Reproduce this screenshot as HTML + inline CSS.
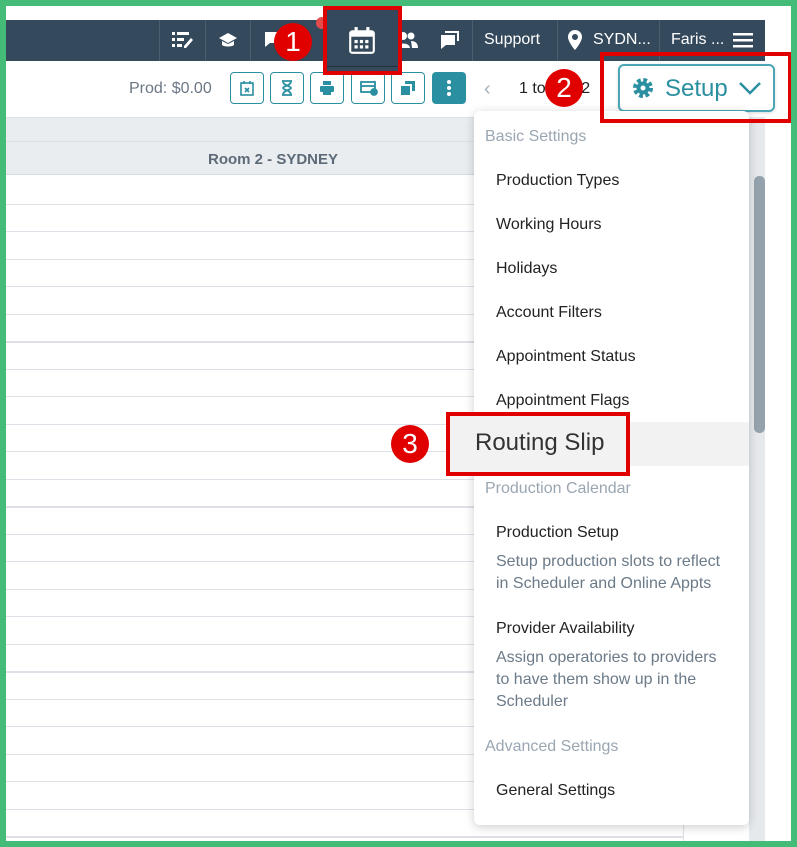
<!DOCTYPE html>
<html><head><meta charset="utf-8"><style>
*{margin:0;padding:0;box-sizing:border-box}
body{width:797px;height:847px;background:#45bb78;position:relative;overflow:hidden;font-family:"Liberation Sans",Roboto,sans-serif}
.a{position:absolute}
#page{left:6px;top:6px;width:785px;height:835px;background:#fff;overflow:hidden}
.nav{left:0;top:14px;width:759px;height:41px;background:#34495c}
.sep{top:0;width:1px;height:41px;background:#4b5e70}
.nt{color:#fff;font-size:16px;top:11px}
.btn{top:66px;width:34px;height:32px;border:1.5px solid #2a8fa0;border-radius:4px;background:#fff}
.line{left:0;width:677px;height:1px;background:#dde1e7}
.mi{left:490px;font-size:16px;color:#222}
.mh{left:479px;font-size:16px;color:#9aa6b2}
.md{left:490px;font-size:16px;color:#6b7a88;line-height:22px}
.red{border:4px solid #e00000}
.circ{width:38px;height:38px;border-radius:50%;background:#e00000;color:#fff;font-size:28px;text-align:center;line-height:38px}
</style></head><body>
<div id="page" class="a">
 <div class="a nav">
  <div class="a sep" style="left:153px"></div><div class="a sep" style="left:199px"></div><div class="a sep" style="left:244px"></div><div class="a sep" style="left:466px"></div><div class="a sep" style="left:551px"></div><div class="a sep" style="left:653px"></div>
  <svg class="a" style="left:165px;top:11px" width="22" height="18" viewBox="0 0 22 18" fill="#fff"><rect x="1" y="1" width="3" height="3"/><rect x="6" y="1" width="12" height="3"/><rect x="1" y="7" width="3" height="3"/><rect x="6" y="7" width="7" height="3"/><rect x="1" y="13" width="3" height="3"/><rect x="6" y="13" width="5" height="3"/><path d="M13 15l7-8 2 2-7 8h-2z"/></svg>
  <svg class="a" style="left:212px;top:12px" width="20" height="16" viewBox="0 0 20 16" fill="#fff"><path d="M10 1L1 6l9 5 9-5z"/><path d="M4 9v4c2 2 10 2 12 0V9l-6 3z"/></svg>
  <svg class="a" style="left:256px;top:10px" width="22" height="20" viewBox="0 0 22 20" fill="#fff"><path d="M3 2h14v11H8l-5 4z"/></svg>
  <svg class="a" style="left:390px;top:11px" width="22" height="18" viewBox="0 0 22 18" fill="#fff"><circle cx="7" cy="5" r="4"/><circle cx="15" cy="5" r="3.5"/><path d="M0 17c0-6 14-6 14 0z M15 10c4 0 7 2 7 7h-6z"/></svg>
  <svg class="a" style="left:433px;top:10px" width="22" height="20" viewBox="0 0 22 20" fill="#fff"><path d="M6 1h14v10h-2V3H6z"/><path d="M2 5h14v10H7l-5 4z"/></svg>
  <div class="a nt" style="left:478px">Support</div>
  <svg class="a" style="left:562px;top:10px" width="14" height="20" viewBox="0 0 14 20" fill="#fff"><path d="M7 0C3 0 0 3 0 7c0 5 7 13 7 13s7-8 7-13c0-4-3-7-7-7zm0 10a3 3 0 110-6 3 3 0 010 6z"/></svg>
  <div class="a nt" style="left:587px">SYDN...</div>
  <div class="a nt" style="left:665px">Faris ...</div>
  <svg class="a" style="left:727px;top:12px" width="20" height="16" viewBox="0 0 20 16" fill="#fff"><rect y="1" width="20" height="2.5"/><rect y="7" width="20" height="2.5"/><rect y="13" width="20" height="2.5"/></svg>
  <div class="a" style="left:310px;top:-3px;width:12px;height:12px;border-radius:50%;background:#e24b4b"></div>
 </div>
 <div class="a" style="left:123px;top:74px;font-size:16px;color:#6b7785">Prod: $0.00</div>
 <div class="a btn" style="left:224px"><svg class="a" style="left:9px;top:7px" width="14" height="16" viewBox="0 0 14 16" fill="none" stroke="#2a8fa0" stroke-width="1.6"><rect x="1" y="3" width="12" height="12"/><path d="M4 1v3M10 1v3M5 8l4 4M9 8l-4 4"/></svg></div>
 <div class="a btn" style="left:264px"><svg class="a" style="left:10px;top:7px" width="12" height="16" viewBox="0 0 12 16" fill="none" stroke="#2a8fa0" stroke-width="1.8"><path d="M1 1h10M1 15h10M2 1c0 5 8 5 8 7s-8 2-8 7M10 1c0 5-8 5-8 7s8 2 8 7"/></svg></div>
 <div class="a btn" style="left:304px"><svg class="a" style="left:8px;top:7px" width="16" height="16" viewBox="0 0 16 16" fill="#2a8fa0"><rect x="4" y="1" width="8" height="4"/><rect x="1" y="6" width="14" height="6" rx="1"/><rect x="4" y="10" width="8" height="5"/></svg></div>
 <div class="a btn" style="left:345px"><svg class="a" style="left:8px;top:7px" width="18" height="16" viewBox="0 0 18 16" fill="none" stroke="#2a8fa0" stroke-width="1.8"><rect x="1" y="2" width="14" height="10"/><path d="M1 6h14"/><circle cx="14" cy="12" r="3" fill="#2a8fa0"/></svg></div>
 <div class="a btn" style="left:385px"><svg class="a" style="left:8px;top:7px" width="16" height="16" viewBox="0 0 16 16" fill="#2a8fa0"><rect x="1" y="6" width="9" height="9"/><path d="M5 1h10v10h-3V4H5z"/></svg></div>
 <div class="a" style="left:426px;top:66px;width:34px;height:32px;border-radius:4px;background:#2a8fa0"><div class="a" style="left:15px;top:8px;width:4px;height:4px;border-radius:2px;background:#fff;box-shadow:0 6px 0 #fff,0 12px 0 #fff"></div></div>
 <div class="a" style="left:478px;top:72px;font-size:20px;color:#a5b2bd">&lsaquo;</div>
 <div class="a" style="left:513px;top:74px;font-size:16px;color:#222">1 to 2 of 2</div>
 <div class="a" style="left:612px;top:58px;width:157px;height:48px;border:2px solid #4aa6b5;border-radius:6px;background:#fff;box-shadow:0 1px 3px rgba(0,0,0,.15)">
  <svg class="a" style="left:13px;top:12px" width="20" height="20" viewBox="0 0 20 20"><circle cx="10" cy="10" r="7.5" fill="none" stroke="#2a8fa0" stroke-width="5" stroke-dasharray="3.5 2.4"/><circle cx="10" cy="10" r="6.5" fill="#2a8fa0"/><circle cx="10" cy="10" r="2.5" fill="#fff"/></svg>
  <div class="a" style="left:45px;top:9px;font-size:24px;color:#2a8fa0">Setup</div>
  <svg class="a" style="left:118px;top:15px" width="24" height="14" viewBox="0 0 24 14" fill="none" stroke="#2a8fa0" stroke-width="2.5"><path d="M2 2l10 10 10-10"/></svg>
 </div>
 <div class="a" style="left:0;top:111px;width:743px;height:24px;background:#e9edf0;border-top:1px solid #dde1e6"></div>
 <div class="a" style="left:0;top:135px;width:743px;height:34px;background:#e9edf0;border-top:1px solid #dbe0e5;border-bottom:1px solid #d6dbe1"></div>
 <div class="a" style="left:202px;top:145px;font-size:15px;color:#5d6b78;font-weight:bold">Room 2 - SYDNEY</div>
 <div class="a line" style="top:198px"></div><div class="a line" style="top:225px"></div><div class="a line" style="top:253px"></div><div class="a line" style="top:280px"></div><div class="a line" style="top:308px"></div><div class="a line" style="top:335px;height:2px"></div>
 <div class="a line" style="top:363px"></div><div class="a line" style="top:390px"></div><div class="a line" style="top:418px"></div><div class="a line" style="top:445px"></div><div class="a line" style="top:473px"></div><div class="a line" style="top:500px;height:2px"></div>
 <div class="a line" style="top:528px"></div><div class="a line" style="top:555px"></div><div class="a line" style="top:583px"></div><div class="a line" style="top:610px"></div><div class="a line" style="top:638px"></div><div class="a line" style="top:665px;height:2px"></div>
 <div class="a line" style="top:693px"></div><div class="a line" style="top:720px"></div><div class="a line" style="top:748px"></div><div class="a line" style="top:775px"></div><div class="a line" style="top:803px"></div><div class="a line" style="top:830px;height:2px"></div>
 <div class="a" style="left:677px;top:169px;width:1px;height:666px;background:#dde1e7"></div>
 <div class="a" style="left:743px;top:111px;width:16px;height:724px;background:#e6e9ec"></div>
 <div class="a" style="left:748px;top:170px;width:11px;height:257px;border-radius:5px;background:#95a2ad"></div>
 <div class="a" style="left:468px;top:105px;width:275px;height:714px;background:#fff;border-radius:6px;box-shadow:0 2px 10px rgba(0,0,0,.2)">
  <div class="a" style="left:0;top:311px;width:275px;height:44px;background:#f2f2f2"></div>
 </div>
 <div class="a mh" style="top:122px">Basic Settings</div>
 <div class="a mi" style="top:166px">Production Types</div>
 <div class="a mi" style="top:210px">Working Hours</div>
 <div class="a mi" style="top:254px">Holidays</div>
 <div class="a mi" style="top:298px">Account Filters</div>
 <div class="a mi" style="top:342px">Appointment Status</div>
 <div class="a mi" style="top:386px">Appointment Flags</div>
 <div class="a mh" style="top:474px">Production Calendar</div>
 <div class="a mi" style="top:518px">Production Setup</div>
 <div class="a md" style="top:545px">Setup production slots to reflect<br>in Scheduler and Online Appts</div>
 <div class="a mi" style="top:614px">Provider Availability</div>
 <div class="a md" style="top:641px">Assign operatories to providers<br>to have them show up in the<br>Scheduler</div>
 <div class="a mh" style="top:732px">Advanced Settings</div>
 <div class="a mi" style="top:776px">General Settings</div>
 <div class="a red" style="left:317px;top:0;width:79px;height:69px;background:#34495c">
  <div class="a" style="left:0;top:56px;width:71px;height:1px;background:#22303d"></div>
  <svg class="a" style="left:20px;top:16px" width="30" height="30" viewBox="0 0 28 28"><rect x="2" y="4" width="24" height="22" rx="3" fill="#fff"/><rect x="4" y="10" width="20" height="14" fill="#34495c"/><rect x="7" y="1" width="3" height="6" fill="#fff"/><rect x="18" y="1" width="3" height="6" fill="#fff"/><g fill="#fff"><rect x="7" y="13" width="3" height="3"/><rect x="12" y="13" width="3" height="3"/><rect x="17" y="13" width="3" height="3"/><rect x="7" y="18" width="3" height="3"/><rect x="12" y="18" width="3" height="3"/><rect x="17" y="18" width="3" height="3"/></g></svg>
 </div>
 <div class="a circ" style="left:268px;top:17px">1</div>
 <div class="a red" style="left:594px;top:46px;width:192px;height:71px"></div>
 <div class="a circ" style="left:539px;top:63px">2</div>
 <div class="a red" style="left:440px;top:406px;width:184px;height:64px;background:#f2f2f2"></div>
 <div class="a" style="left:469px;top:423px;font-size:24px;color:#333">Routing Slip</div>
 <div class="a circ" style="left:385px;top:419px">3</div>
</div>
</body></html>
